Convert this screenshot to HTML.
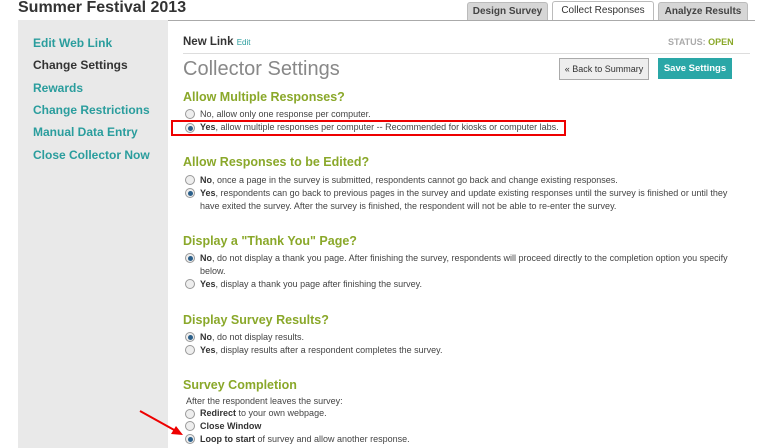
<html><head><style>
body{margin:0;width:768px;height:448px;overflow:hidden;background:#fff;font-family:"Liberation Sans",sans-serif;position:relative}
.a{position:absolute;white-space:nowrap}
.side{position:absolute;left:18px;top:20px;width:150px;height:428px;background:#e9e9e9}
.sl{position:absolute;left:33px;font-size:12px;font-weight:bold;color:#2a9d9d}
.h{position:absolute;left:183px;font-size:12.5px;font-weight:bold;color:#8aa82a}
.t{position:absolute;left:200px;font-size:9px;color:#444;line-height:12.5px}
.t b{color:#333}
.r{position:absolute;left:185px;width:8px;height:8px;border:1px solid #999;border-radius:50%;background:#eee}
.r.on::after{content:"";position:absolute;left:1.5px;top:1.5px;width:5px;height:5px;border-radius:50%;background:#2b5f8a}
.tab{position:absolute;top:2px;height:17px;font-size:10px;font-weight:bold;color:#444;background:#d6d6d6;border:1px solid #bbb;border-bottom:none;border-radius:3px 3px 0 0;text-align:center;line-height:17px}
</style></head><body>
<div class="a" style="left:18px;top:-1px;font-size:16px;font-weight:bold;color:#333">Summer Festival 2013</div>
<div class="tab" style="left:467px;width:79px">Design Survey</div>
<div class="tab" style="left:552px;width:100px;background:#fff;top:1px;height:19px;font-weight:normal;color:#333">Collect Responses</div>
<div class="tab" style="left:658px;width:88px">Analyze Results</div>
<div class="a" style="left:18px;top:20px;width:737px;height:1px;background:#aaa"></div>
<div class="side"></div>
<div class="sl" style="top:36px">Edit Web Link</div>
<div class="sl" style="top:58px;color:#333">Change Settings</div>
<div class="sl" style="top:81px">Rewards</div>
<div class="sl" style="top:103px">Change Restrictions</div>
<div class="sl" style="top:125px">Manual Data Entry</div>
<div class="sl" style="top:148px">Close Collector Now</div>
<div class="a" style="left:183px;top:36px;font-size:11.5px;font-weight:bold;color:#333">New Link <span style="font-size:8px;color:#2a9d9d;font-weight:normal">Edit</span></div>
<div class="a" style="left:668px;top:37px;font-size:9px;font-weight:bold;color:#aaa">STATUS: <span style="color:#8aa82a">OPEN</span></div>
<div class="a" style="left:183px;top:53px;width:567px;height:1px;background:#ddd"></div>
<div class="a" style="left:183px;top:58px;font-size:20px;color:#888">Collector Settings</div>
<div class="a" style="left:559px;top:58px;width:88px;height:20px;border:1px solid #aaa;background:#eee;font-size:9px;color:#333;text-align:center;line-height:20px">« Back to Summary</div>
<div class="a" style="left:658px;top:58px;width:74px;height:21px;background:#2aa7a7;font-size:9.5px;font-weight:bold;color:#fff;text-align:center;line-height:21px">Save Settings</div>
<div class="h" style="top:90px">Allow Multiple Responses?</div>
<div class="r" style="top:109px"></div><div class="t" style="top:108px">No, allow only one response per computer.</div>
<div class="a" style="left:171px;top:120px;width:391px;height:12px;border:2px solid #e00"></div>
<div class="r on" style="top:123px"></div><div class="t" style="top:121px"><b>Yes</b>, allow multiple responses per computer -- Recommended for kiosks or computer labs.</div>
<div class="h" style="top:155px">Allow Responses to be Edited?</div>
<div class="r" style="top:175px"></div><div class="t" style="top:174px"><b>No</b>, once a page in the survey is submitted, respondents cannot go back and change existing responses.</div>
<div class="r on" style="top:188px"></div><div class="t" style="top:187px;white-space:normal;width:545px"><b>Yes</b>, respondents can go back to previous pages in the survey and update existing responses until the survey is finished or until they have exited the survey. After the survey is finished, the respondent will not be able to re-enter the survey.</div>
<div class="h" style="top:234px">Display a "Thank You" Page?</div>
<div class="r on" style="top:253px"></div><div class="t" style="top:252px;white-space:normal;width:545px"><b>No</b>, do not display a thank you page. After finishing the survey, respondents will proceed directly to the completion option you specify below.</div>
<div class="r" style="top:279px"></div><div class="t" style="top:278px"><b>Yes</b>, display a thank you page after finishing the survey.</div>
<div class="h" style="top:313px">Display Survey Results?</div>
<div class="r on" style="top:332px"></div><div class="t" style="top:331px"><b>No</b>, do not display results.</div>
<div class="r" style="top:345px"></div><div class="t" style="top:344px"><b>Yes</b>, display results after a respondent completes the survey.</div>
<div class="h" style="top:378px">Survey Completion</div>
<div class="t" style="top:395px;left:186px">After the respondent leaves the survey:</div>
<div class="r" style="top:409px"></div><div class="t" style="top:407px"><b>Redirect</b> to your own webpage.</div>
<div class="r" style="top:421px"></div><div class="t" style="top:420px"><b>Close Window</b></div>
<div class="r on" style="top:434px"></div><div class="t" style="top:433px"><b>Loop to start</b> of survey and allow another response.</div>
<svg class="a" style="left:0;top:0" width="768" height="448"><line x1="140" y1="411" x2="176" y2="431" stroke="#e00" stroke-width="2"/><polygon points="183,435 171,434 176,426" fill="#e00"/></svg>
</body></html>
